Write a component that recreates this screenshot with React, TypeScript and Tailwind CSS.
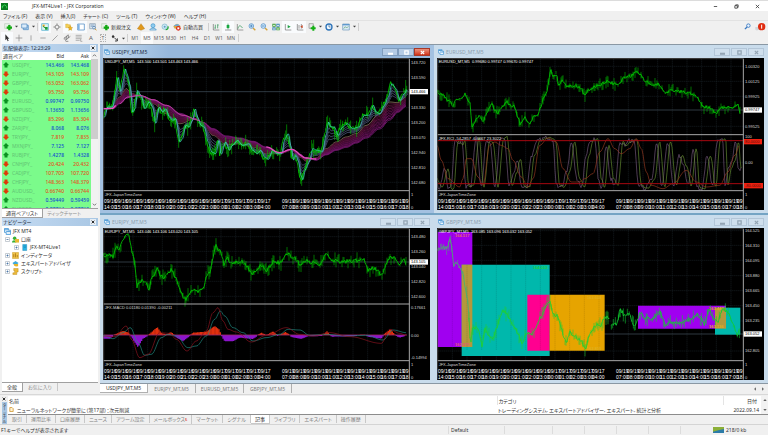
import React, { useState } from "react";
import clsx from "clsx";

type Pt = [number, number];

const quotes = [
  { name: "USDJPY_", bid: "143.466", ask: "143.468", up: true, blue: true },
  { name: "EURJPY_", bid: "143.105", ask: "143.109", up: false, blue: false },
  { name: "GBPJPY_", bid: "163.052", ask: "163.062", up: false, blue: false },
  { name: "AUDJPY_", bid: "95.750", ask: "95.756", up: false, blue: false },
  { name: "EURUSD_", bid: "0.99747", ask: "0.99750", up: true, blue: true },
  { name: "GBPUSD_", bid: "1.13650", ask: "1.13656", up: true, blue: true },
  { name: "NZDJPY_", bid: "85.296", ask: "85.304", up: false, blue: false },
  { name: "ZARJPY_", bid: "8.068", ask: "8.076", up: true, blue: true },
  { name: "TRYJPY_", bid: "7.819", ask: "7.835", up: false, blue: false },
  { name: "MXNJPY_", bid: "7.125", ask: "7.127", up: true, blue: true },
  { name: "RUBJPY_", bid: "1.4278", ask: "1.4328", up: true, blue: true },
  { name: "CNHJPY_", bid: "20.424", ask: "20.432", up: false, blue: false },
  { name: "CADJPY_", bid: "107.705", ask: "107.720", up: false, blue: false },
  { name: "CHFJPY_", bid: "148.363", ask: "148.379", up: false, blue: false },
  { name: "AUDUSD_", bid: "0.66740", ask: "0.66744", up: false, blue: false },
  { name: "NZDUSD_", bid: "0.59449", ask: "0.59459", up: true, blue: true },
  { name: "EURGBP_", bid: "0.87764", ask: "0.87769", up: true, blue: true },
];

const menus = [
  "ファイル (F)",
  "表示 (V)",
  "挿入(I)",
  "チャート (C)",
  "ツール (T)",
  "ウィンドウ (W)",
  "ヘルプ (H)",
];
const periods = ["M1", "M5", "M15", "M30", "H1", "H4", "D1", "W1", "MN"];
const chartTabs = ["USDJPY_MT,M5", "EURJPY_MT,M5", "EURUSD_MT,M5", "GBPJPY_MT,M5"];
const terminalTabs = [
  "取引",
  "運用比率",
  "口座履歴",
  "ニュース",
  "アラーム設定",
  "メールボックス",
  "マーケット",
  "シグナル",
  "記事",
  "ライブラリ",
  "エキスパート",
  "操作履歴",
];

// chart data, in thirds of a pixel
const usdjpy: Pt[] = [
  [2, 177], [10, 147], [25, 147], [35, 102], [42, 57], [50, 102], [58, 62], [63, 32], [70, 52], [78, 82],
  [85, 162], [93, 152], [100, 97], [110, 112], [122, 152], [135, 132], [145, 147], [155, 197], [165, 147],
  [175, 162], [185, 152], [195, 177], [205, 187], [215, 182], [227, 252], [235, 242], [245, 202], [255, 207],
  [265, 187], [273, 152], [280, 177], [290, 202], [300, 207], [312, 252], [322, 282], [335, 287], [345, 245],
  [350, 290], [365, 252], [375, 277], [385, 262], [400, 247], [415, 262], [435, 257], [445, 277], [460, 287],
  [470, 277], [480, 297], [493, 304], [505, 277], [520, 287], [533, 287], [540, 247], [552, 227], [562, 272],
  [567, 307], [575, 292], [583, 312], [590, 352], [595, 365], [605, 332], [615, 312], [625, 272], [640, 277],
  [655, 280], [665, 232], [673, 192], [680, 207], [690, 207], [702, 232], [715, 207], [730, 197], [745, 212],
  [765, 207], [780, 172], [795, 172], [808, 142], [815, 162], [828, 167], [840, 142], [852, 117], [863, 77],
  [875, 92], [888, 127], [900, 107], [911, 90],
];
const ribbonInner: Pt[] = [
  [2, 152], [30, 147], [50, 117], [70, 92], [85, 107], [120, 117], [150, 137], [190, 167], [230, 197],
  [275, 182], [300, 194], [330, 232], [370, 260], [410, 257], [450, 267], [490, 287], [530, 287], [565, 277],
  [590, 297], [610, 309], [640, 300], [670, 272], [700, 252], [730, 237], [760, 227], [790, 202], [830, 167],
  [860, 132], [885, 134], [910, 117],
];
const ribbonOuter: Pt[] = [
  [2, 152], [30, 152], [50, 137], [75, 117], [110, 112], [150, 125], [190, 142], [240, 172], [290, 187],
  [330, 212], [370, 234], [410, 240], [450, 250], [490, 267], [530, 284], [565, 274], [610, 300], [640, 303],
  [690, 277], [740, 262], [790, 237], [840, 203], [880, 163], [910, 142],
];
const eurusd: Pt[] = [
  [0, 98], [18, 112], [33, 127], [48, 142], [58, 127], [73, 127], [85, 107], [93, 132], [100, 137], [105, 212],
  [113, 192], [126, 177], [140, 190], [148, 167], [165, 132], [173, 157], [183, 167], [198, 142], [210, 132],
  [223, 147], [231, 140], [238, 162], [250, 200], [263, 177], [278, 200], [288, 177], [303, 172], [311, 147],
  [318, 122], [328, 107], [335, 67], [341, 30], [348, 57], [358, 47], [365, 82], [378, 67], [388, 87],
  [418, 84], [433, 92], [443, 112], [453, 97], [468, 87], [493, 77], [508, 70], [543, 80], [563, 57],
  [583, 52], [595, 42], [606, 47], [623, 67], [638, 80], [663, 77], [683, 104], [703, 97], [738, 102],
  [763, 107], [778, 117], [788, 127], [800, 147], [818, 147], [836, 167], [853, 147], [873, 147], [888, 152],
  [903, 140], [910, 167],
];
const rciSlow: Pt[] = [
  [0, 262], [13, 307], [33, 362], [68, 387], [78, 362], [88, 302], [103, 302], [123, 357], [138, 382],
  [158, 262], [173, 252], [193, 262], [213, 272], [228, 307], [253, 357], [273, 387], [288, 362], [308, 262],
  [333, 240], [358, 252], [378, 332], [403, 372], [428, 372], [443, 362], [468, 347], [488, 282], [513, 242],
  [533, 272], [553, 287], [578, 272], [598, 242], [613, 272], [628, 342], [643, 382], [678, 392], [708, 377],
  [748, 337], [778, 372], [808, 387], [848, 382], [873, 342], [893, 292], [908, 262],
];
const rciFast: Pt[] = [
  [0, 362], [16, 387], [33, 332], [43, 392], [50, 392], [63, 252], [78, 262], [83, 247], [96, 387], [110, 382],
  [126, 242], [141, 387], [158, 247], [168, 252], [183, 387], [200, 242], [210, 237], [226, 382], [240, 342],
  [250, 302], [263, 387], [278, 387], [293, 292], [310, 247], [338, 237], [356, 247], [368, 382], [383, 387],
  [398, 342], [413, 252], [428, 362], [443, 387], [456, 292], [468, 247], [483, 242], [493, 362], [503, 387],
  [516, 262], [530, 362], [543, 382], [558, 252], [568, 262], [586, 247], [600, 247], [613, 382], [633, 392],
  [653, 362], [668, 252], [683, 387], [701, 252], [718, 382], [736, 292], [748, 322], [763, 382], [778, 272],
  [788, 387], [803, 392], [820, 292], [836, 387], [850, 247], [866, 242], [873, 382], [883, 332], [893, 312],
  [905, 252], [912, 332],
];
const eurjpy: Pt[] = [
  [0, 79], [30, 84], [40, 59], [50, 62], [60, 39], [70, 24], [78, 24], [83, 54], [90, 84], [95, 109],
  [102, 174], [115, 159], [130, 169], [138, 184], [148, 144], [155, 139], [163, 114], [173, 144], [185, 152],
  [195, 134], [205, 124], [212, 139], [222, 159], [233, 189], [247, 216], [258, 199], [270, 184], [280, 189],
  [290, 189], [303, 179], [313, 134], [322, 134], [330, 84], [338, 46], [345, 64], [355, 72], [362, 109],
  [372, 89], [385, 109], [402, 104], [420, 102], [435, 119], [448, 139], [460, 124], [475, 109], [490, 126],
  [510, 102], [535, 104], [550, 74], [565, 86], [582, 94], [592, 114], [608, 99], [625, 104], [650, 109],
  [670, 76], [682, 94], [710, 102], [745, 99], [785, 96], [795, 124], [815, 119], [825, 129], [835, 144],
  [845, 119], [860, 84], [875, 89], [890, 116], [902, 92], [910, 109],
];
const macdBars: Pt[] = [
  [0, 8], [20, 8], [35, -2], [60, -12], [78, -7], [85, 3], [105, 34], [120, 8], [135, 0], [145, -8],
  [163, -24], [175, -6], [190, -2], [205, -9], [218, 3], [240, 16], [260, 1], [270, -7], [310, -10],
  [335, -27], [348, -17], [358, 5], [365, 16], [390, 16], [410, 5], [450, 9], [465, -1], [475, -7], [490, 0],
  [510, -11], [525, 1], [548, -9], [565, 3], [595, 9], [615, 1], [660, 0], [672, -11], [685, 2], [740, 1],
  [785, -1], [800, 3], [835, 8], [845, -5], [863, -17], [875, -2], [890, 5], [910, -1],
];
const macdSignal: Pt[] = [
  [0, 322], [30, 332], [60, 314], [82, 299], [105, 344], [125, 382], [145, 379], [175, 329], [195, 319],
  [220, 324], [255, 359], [280, 354], [310, 324], [335, 274], [352, 249], [365, 264], [390, 299], [420, 314],
  [450, 339], [490, 329], [530, 319], [555, 304], [590, 306], [620, 322], [670, 319], [730, 324], [790, 322],
  [840, 336], [870, 306], [910, 314],
];
const macdMain: Pt[] = [
  [0, 324], [35, 326], [70, 294], [85, 334], [110, 389], [135, 379], [170, 314], [200, 316], [220, 334],
  [252, 369], [280, 339], [310, 309], [330, 254], [345, 239], [360, 279], [375, 304], [400, 312], [445, 342],
  [490, 322], [550, 299], [590, 319], [630, 324], [680, 314], [740, 326], [835, 346], [860, 304], [890, 316],
  [910, 322],
];
const gbpjpy: Pt[] = [
  [2, 64], [23, 59], [33, 54], [38, 29], [45, 64], [50, 119], [58, 104], [68, 119], [78, 139], [85, 179],
  [91, 204], [96, 274], [100, 349], [108, 299], [123, 304], [135, 354], [143, 304], [158, 324], [168, 329],
  [178, 304], [188, 274], [198, 244], [213, 264], [223, 284], [238, 304], [256, 349], [268, 314], [283, 319],
  [293, 309], [308, 274], [323, 244], [333, 219], [340, 219], [348, 259], [363, 264], [373, 304], [388, 349],
  [398, 314], [418, 329], [433, 339], [446, 364], [458, 314], [478, 289], [493, 289], [503, 264], [518, 274],
  [523, 294], [538, 289], [550, 244], [563, 264], [578, 259], [593, 299], [608, 254], [623, 269], [643, 274],
  [656, 264], [671, 249], [685, 294], [698, 279], [718, 284], [748, 279], [768, 269], [783, 259], [803, 289],
  [815, 244], [828, 269], [843, 284], [856, 244], [873, 254], [888, 289], [900, 319], [909, 304],
];

const rand = (n: number) => {
  const v = Math.sin(n * 12.9898) * 43758.5453;
  return v - Math.floor(v);
};

const valueAt = (pts: Pt[], x: number, smooth = false) => {
  for (let i = 1; i < pts.length; i++) {
    if (x <= pts[i][0]) {
      const [x0, y0] = pts[i - 1];
      const [x1, y1] = pts[i];
      let t = Math.max(0, (x - x0) / (x1 - x0));
      if (smooth) t = (1 - Math.cos(Math.PI * t)) / 2;
      return y0 + (y1 - y0) * t;
    }
  }
  return pts[pts.length - 1][1];
};

const linePath = (pts: Pt[], smooth = false, noise = 0, shift = 0) => {
  const out: string[] = [];
  for (let x = pts[0][0]; x <= pts[pts.length - 1][0]; x += 3) {
    const y = valueAt(pts, x + shift, smooth) + (rand(x + 7) - 0.5) * noise;
    out.push(`${x} ${y.toFixed(1)}`);
  }
  return "M" + out.join("L");
};

const Candles = ({ pts, wick, color = "#00c800" }: { pts: Pt[]; wick: number; color?: string }) => {
  let wicks = "";
  for (let x = pts[0][0]; x <= pts[pts.length - 1][0]; x += 3) {
    const y = valueAt(pts, x);
    const up = rand(x) ** 3 * wick;
    const down = rand(x + 1) ** 3 * wick;
    wicks += `M${x} ${(y - up).toFixed(1)}V${(y + down).toFixed(1)}`;
  }
  return (
    <g stroke={color} fill="none">
      <path d={wicks} strokeWidth="2" opacity="0.85" />
      <path d={linePath(pts, false, wick / 2)} strokeWidth="2.5" />
    </g>
  );
};

const Ribbon = () => {
  const colors = [
    "#84705a", "#4c1030", "#641440", "#561038", "#701450", "#5a1044",
    "#701458", "#5c1050", "#7c1468", "#661058", "#8c1880", "#7c1c78",
  ];
  return (
    <g fill="none">
      {colors.map((c, i) => {
        const t = i / (colors.length - 1);
        const pts = ribbonInner.map(
          ([x, y]): Pt => [x, y * (1 - t) + valueAt(ribbonOuter, x) * t + (x > 620 ? t * 3 : 0)]
        );
        return <path key={c} d={linePath(pts, true)} stroke={c} strokeWidth="3" />;
      })}
      {[0.2, 0.35, 0.5, 0.65].map((t) => {
        const pts = usdjpy.map(([x, y]): Pt => [x + 4, y * (1 - t) + valueAt(ribbonInner, x) * t]);
        return <path key={t} d={linePath(pts)} stroke="#465272" strokeWidth="3" opacity="0.8" />;
      })}
    </g>
  );
};

const label = { fontFamily: '"Liberation Sans", sans-serif', fontSize: 12 };

type ChartProps = {
  info: string;
  scale: [number, string][];
  price: [number, string];
  split?: number;
  children: React.ReactNode;
};

const Chart = ({ info, scale, price, split, children }: ChartProps) => {
  const hours = [
    ...Array.from({ length: 15 }, (_, i) => ({
      x: 3 + i * 33,
      d: i > 9 ? "09/17" : "09/16",
      h: String((14 + i) % 24).padStart(2, "0") + ":00",
    })),
    ...Array.from({ length: 11 }, (_, i) => ({
      x: 537 + i * 33,
      d: "09/19",
      h: String(7 + i).padStart(2, "0") + ":00",
    })),
    { x: 900, d: "09", h: "18" },
  ];
  return (
    <svg viewBox="0 0 981 456" className="block w-full bg-black">
      <g stroke="#1f2a30" strokeWidth="2" strokeDasharray="3 3">
        {Array.from({ length: 20 }, (_, i) => (
          <path key={i} d={`M${46 + i * 44} 4V396`} />
        ))}
        {scale.map(([y]) => (
          <path key={y} d={`M2 ${y}H918`} />
        ))}
      </g>
      <path d={`M2 ${price[0]}H918`} stroke="#465460" strokeWidth="2" />
      {children}
      <g stroke="#a8a8a8" strokeWidth="3" fill="none">
        <path d="M919 2V455M2 398H919" />
        {split && <path d={`M2 ${split}H919`} />}
      </g>
      <path d="M2 455V2H919" stroke="#686868" strokeWidth="2" fill="none" />
      <g fill="#d8d8d8" style={label}>
        <text x="5" y="16" xmlSpace="preserve" fill="#fff">{info}</text>
        {scale.map(([y, t]) => (
          <text key={t} x="924" y={y + 4}>{t}</text>
        ))}
        <rect x="920" y={price[0] - 8} width="55" height="16" fill="#fff" />
        <text x="924" y={price[0] + 4} fill="#000">{price[1]}</text>
        <text x="5" y="414">JFX-JapanTimeZone</text>
        <text x="924" y="414">1</text>
        <text x="924" y="453">0</text>
      </g>
      <g fill="#fff" fontSize="15" fontFamily='"Liberation Sans", sans-serif'>
        {hours.map(({ x, h, d }) => (
          <g key={x}>
            <text x={x} y="435">{d}</text>
            <text x={x} y="452">{h}</text>
          </g>
        ))}
      </g>
    </svg>
  );
};

const ChartWindow = ({ title, active, children }: { title: string; active?: boolean; children: React.ReactNode }) => (
  <section
    className={clsx(
      "min-w-0 pr-1 pb-[3px] pl-[3px]",
      active ? "bg-[#a3c1e1]" : "bg-[#c9dcec]"
    )}
  >
    <header
      className={clsx(
        "flex h-[13px] items-center gap-[2px] pl-px",
        active
          ? "bg-linear-to-r from-[#c3d9ee] to-[#97b8dc] to-20% text-[#16283c]"
          : "text-[#8c9eae]"
      )}
    >
      <svg viewBox="0 0 12 12" className="size-[6px]">
        <path d="M1 1H8V4H11V11H4V8H1Z" fill="#eaf5ff" stroke="#58a0d8" strokeWidth="1.5" />
        <path d="M1 3H8M4 6H11" stroke="#58a0d8" strokeWidth="2" />
      </svg>
      <h2 className="grow">{title}</h2>
      <div className={clsx("mt-[3px] flex h-2 self-start", !active && "gap-px")}>
        {["最小化", "最大化", "閉じる"].map((name, i) => (
          <button
            key={name}
            type="button"
            aria-label={name}
            className={clsx(
              "flex h-2 w-4 items-center justify-center border",
              active && i === 2 && "border-[#a83828] bg-linear-to-b from-[#e8907c] to-[#d02c10]",
              active && i !== 2 && "border-[#7f9cbd] bg-[#b4cbe5]",
              !active && "border-[#b3c6d8] bg-[#cfdfed]"
            )}
          >
            <svg viewBox="0 0 12 12" className="size-[5px]" fill="none" strokeWidth="3">
              <path
                d={["M1 8H11V10H1Z", "M2 2H10V10H2Z", "M2 2L10 10M10 2L2 10"][i]}
                stroke={active ? "#fff" : "#93a4b4"}
              />
            </svg>
          </button>
        ))}
      </div>
    </header>
    {children}
  </section>
);

const icons: Record<string, React.ReactNode> = {
  newChart: (
    <>
      <path d="M2 2H16V16H2Z" fill="#e8f3e8" stroke="#8aa08a" />
      <path d="M8 14H24M16 6V22" stroke="#12a812" strokeWidth="7" />
    </>
  ),
  profiles: (
    <>
      <path d="M7 7H22V20H7Z" fill="#a9cdec" stroke="#4a86c0" strokeWidth="2" />
      <path d="M2 3H18V15H2Z" fill="#dcecfa" stroke="#4a86c0" strokeWidth="2" />
    </>
  ),
  market: (
    <>
      <path d="M2 2H22V22H2Z" fill="#dff5f0" stroke="#3fa7c8" strokeWidth="2" />
      <path d="M5 5H11V11H5Z" fill="#e8a020" />
      <path d="M12 12H20V20H12Z" fill="#1a9a38" />
      <path d="M6 10L17 18" stroke="#20a040" strokeWidth="3" />
    </>
  ),
  crosshair: (
    <g fill="none" stroke="#707070" strokeWidth="2">
      <circle cx="12" cy="12" r="6" />
      <path d="M12 1V8M12 16V23M1 12H8M16 12H23" />
    </g>
  ),
  folder: (
    <>
      <path d="M2 3H9L11 5H16V14H2Z" fill="#f3cf58" stroke="#c99a20" />
      <path d="M16 8L18 13L23 14L19 17L20 22L16 20L11 22L13 17L9 14L14 13Z" fill="#f0b420" stroke="#b98510" />
    </>
  ),
  panel: (
    <>
      <path d="M2 3H22V21H2Z" fill="#fff" stroke="#3d7fc0" strokeWidth="2" />
      <path d="M3 4H8V20H3Z" fill="#7cb2e6" />
    </>
  ),
  tester: (
    <>
      <path d="M2 2H19V17H2Z" fill="#dde8f2" stroke="#8499ac" strokeWidth="2" />
      <path d="M5 6H16M5 10H12" stroke="#6b90b4" strokeWidth="2" />
      <circle cx="15" cy="14" r="4" fill="#e8f4ff" stroke="#3b6fa8" strokeWidth="2" />
      <path d="M18 17L22 22" stroke="#d09a30" strokeWidth="3" />
    </>
  ),
  gold: <path d="M12 2L20 13L23 17L12 22L1 17L5 12Z" fill="#e0981c" stroke="#a36c10" />,
  person: (
    <>
      <circle cx="12" cy="8" r="6" fill="#8fcdf0" stroke="#3f92c8" strokeWidth="2" />
      <path d="M2 21C4 14 20 14 22 21Z" fill="#c8e2f4" stroke="#3f92c8" strokeWidth="2" />
    </>
  ),
  signal: (
    <>
      <circle cx="11" cy="11" r="8" fill="#d0e8f2" stroke="#7ab2cc" strokeWidth="2" />
      <circle cx="11" cy="11" r="3" fill="#5aa0c8" />
      <path d="M14 20C20 20 22 16 21 10" fill="none" stroke="#20a838" strokeWidth="4" />
    </>
  ),
  auto: (
    <>
      <path d="M2 9L12 3L22 9L18 16H5Z" fill="#e9ae30" stroke="#b07c18" />
      <path d="M3 10C4 2 18 2 20 8Z" fill="#68a8dc" />
      <circle cx="16" cy="16" r="7" fill="#d82818" />
      <path d="M13 13H19V19H13Z" fill="#fff" />
    </>
  ),
  bars: (
    <g fill="none" strokeWidth="2">
      <path d="M4 3V21H22" stroke="#707070" />
      <path d="M10 5V17M10 15H7M17 4V16M17 6H20" stroke="#23904a" />
    </g>
  ),
  candle: (
    <g strokeWidth="2">
      <path d="M3 21H22" stroke="#707070" />
      <path d="M12 2V19" stroke="#118a30" />
      <path d="M8 6H16V15H8Z" fill="#18a840" />
    </g>
  ),
  line: (
    <g fill="none" strokeWidth="2">
      <path d="M4 3V21H22" stroke="#707070" />
      <path d="M6 17C9 4 14 8 20 15" stroke="#23904a" />
    </g>
  ),
  zoomIn: (
    <>
      <path d="M15 15L22 22" stroke="#d3a238" strokeWidth="4" />
      <circle cx="10" cy="9" r="7" fill="#cfe7fa" stroke="#4488c4" strokeWidth="2" />
      <path d="M6 9H14M10 5V13" stroke="#2d6fb0" strokeWidth="2" />
    </>
  ),
  zoomOut: (
    <>
      <path d="M15 15L22 22" stroke="#d3a238" strokeWidth="4" />
      <circle cx="10" cy="9" r="7" fill="#cfe7fa" stroke="#4488c4" strokeWidth="2" />
      <path d="M6 9H14" stroke="#2d6fb0" strokeWidth="2" />
    </>
  ),
  tile: (
    <>
      <path d="M1 2H11V11H1ZM13 13H23V22H13Z" fill="#3f9e38" />
      <path d="M13 2H23V11H13ZM1 13H11V22H1Z" fill="#3f86b8" />
      <path d="M3 7H9M15 7H21M3 18H9M15 18H21" stroke="#e8f8e8" strokeWidth="3" />
    </>
  ),
  scroll: (
    <>
      <path d="M4 3V21H22" fill="none" stroke="#707070" strokeWidth="2" />
      <path d="M11 6L20 11L11 16Z" fill="#1ea042" />
    </>
  ),
  shift: (
    <>
      <path d="M4 3V21H22M16 3V17" fill="none" stroke="#707070" strokeWidth="2" />
      <path d="M20 6L13 11L20 16Z" fill="#c84828" />
      <path d="M9 6V17" stroke="#707070" strokeWidth="2" />
    </>
  ),
  indicator: (
    <>
      <path d="M3 2H16V16H3Z" fill="#e8e8e8" stroke="#8c8c8c" strokeWidth="2" />
      <path d="M8 16H23M16 8V23" stroke="#12b012" strokeWidth="6" />
    </>
  ),
  clock: (
    <>
      <circle cx="12" cy="12" r="9" fill="#f2f9ff" stroke="#2f74b8" strokeWidth="4" />
      <path d="M12 6V12H17" fill="none" stroke="#2f5f90" strokeWidth="2" />
    </>
  ),
  template: (
    <>
      <path d="M2 3H22V21H2Z" fill="#dbeaf6" stroke="#6d98bc" strokeWidth="2" />
      <path d="M2 5H22" stroke="#5f98cc" strokeWidth="4" />
      <path d="M5 17L10 11L14 15L19 10" fill="none" stroke="#58a068" strokeWidth="2" />
    </>
  ),
  pointer: <path d="M7 1V19L11 15L14 22L17 20L14 14H19Z" fill="#303030" />,
  cross: <path d="M12 2V22M2 12H22" stroke="#808080" strokeWidth="2" />,
  vline: <path d="M12 4V20" stroke="#808080" strokeWidth="2" />,
  hline: <path d="M4 12H20" stroke="#808080" strokeWidth="2" />,
  trend: <path d="M4 20L20 4" stroke="#808080" strokeWidth="2" />,
  channel: <path d="M2 14L16 2M6 20L22 7M6 10V18M11 6V16M16 3V12M8 22H16" stroke="#606060" strokeWidth="2" />,
  fib: <path d="M2 4H20M2 9H20M2 14H20M2 19H14M17 15V22H22" stroke="#909090" strokeWidth="2" fill="none" />,
  arrows: (
    <>
      <path d="M6 2L11 8L6 13L2 8Z" fill="#303030" />
      <path d="M10 11L19 20M19 13V21H12" fill="none" stroke="#404040" strokeWidth="3" />
    </>
  ),
};

const ToolButton = ({ icon, name, on }: { icon: string; name: string; on?: boolean }) => (
  <button
    type="button"
    aria-label={name}
    aria-pressed={on}
    className={clsx("flex size-3 shrink-0 items-center justify-center", on && "bg-[#f9fbfd]")}
  >
    <svg viewBox="0 0 24 24" className="size-2">{icons[icon]}</svg>
  </button>
);

const Caret = () => (
  <svg viewBox="0 0 12 12" className="w-[5px] shrink-0 p-px">
    <path d="M0 3H12L6 10Z" fill="#404040" />
  </svg>
);

const Sep = () => <span className="mx-px h-2 w-px shrink-0 bg-[#cfcfcf]" />;

const PanelTitle = ({ children }: { children: React.ReactNode }) => (
  <div className="flex h-2 items-center justify-between bg-linear-to-r from-[#c6dcf3] to-[#a9c7e4] px-px text-[#1c2c40]">
    <h2>{children}</h2>
    <button type="button" aria-label="閉じる" className="mr-px flex size-[6px] items-center justify-center bg-[#e6eef6]">
      <svg viewBox="0 0 12 12" className="size-1">
        <path d="M2 2L10 10M10 2L2 10" stroke="#303030" strokeWidth="3" />
      </svg>
    </button>
  </div>
);

const TreeIcon = ({ kind }: { kind: string }) => (
  <svg viewBox="0 0 16 16" className="size-[7px] shrink-0">
    {kind === "root" && (
      <path d="M1 1H10V5H15V15H5V10H1ZM1 4H10M5 8H15" fill="#dff0fc" stroke="#4b9ad8" strokeWidth="2" />
    )}
    {kind === "accounts" && (
      <>
        <circle cx="6" cy="5" r="4" fill="#35b035" />
        <path d="M0 15C0 8 9 8 10 15Z" fill="#35b035" />
        <path d="M7 7H16V15H7Z" fill="#e8b830" />
      </>
    )}
    {kind === "server" && <path d="M4 1H13V15H4ZM7 4H11V8H7Z" fill="#28b4e4" stroke="#1684b4" />}
    {kind === "indicator" && (
      <>
        <path d="M1 1H15V15H1Z" fill="#f0c448" stroke="#c49420" />
        <path d="M4 12V5M8 12V3M12 12V7" stroke="#b07c18" strokeWidth="2" />
      </>
    )}
    {kind === "expert" && (
      <>
        <path d="M1 7L8 2L15 7L11 10H4Z" fill="#3fa8d8" />
        <path d="M4 9H14V14L9 15L5 13Z" fill="#e8b428" />
      </>
    )}
    {kind === "script" && <path d="M4 1H14V9H11V15H2V11H6V6H4Z" fill="#edbb38" stroke="#b98618" />}
  </svg>
);

const tree = [
  { name: "JFX MT4", kind: "root", pad: "pl-[2px]", box: "" },
  { name: "口座", kind: "accounts", pad: "pl-[3px]", box: "−" },
  { name: "JFX-MT4Live1", kind: "server", pad: "pl-3", box: "+" },
  { name: "インディケータ", kind: "indicator", pad: "pl-[3px]", box: "+" },
  { name: "エキスパートアドバイザ", kind: "expert", pad: "pl-[3px]", box: "+" },
  { name: "スクリプト", kind: "script", pad: "pl-[3px]", box: "+" },
];

const App = () => {
  const [period, setPeriod] = useState("M5");
  const [chartTab, setChartTab] = useState(chartTabs[0]);
  const [terminalTab, setTerminalTab] = useState("記事");

  return (
    <div className="flex min-h-screen w-full flex-col overflow-hidden border-t border-[#dcdcdc] bg-[#f0f0f0] font-['Noto_Sans','Noto_Sans_CJK_JP',sans-serif] text-[5px] leading-[8px] text-[#303030] [font-feature-settings:'palt']">
      <header className="flex h-[10px] items-center bg-white pr-2 pl-px">
        <svg viewBox="0 0 16 16" className="size-[7px]">
          <path d="M0 0H16V16H0Z" fill="#0a7a20" />
          <path d="M3 12V6M3 9L8 4L13 8V12" stroke="#3ce05c" strokeWidth="2" fill="none" />
        </svg>
        <h1 className="ml-6 grow">JFX-MT4Live1 - JFX Corporation</h1>
        <div className="flex gap-4">
          {["M2 6H10", "M2 4H8V10H2ZM4 4V2H10V8H8", "M2 2L10 10M10 2L2 10"].map((d, i) => (
            <button key={d} type="button" aria-label={["最小化", "元に戻す", "閉じる"][i]}>
              <svg viewBox="0 0 12 12" className="size-[5px]">
                <path d={d} fill="none" stroke="#404040" strokeWidth="2" />
              </svg>
            </button>
          ))}
        </div>
      </header>

      <nav className="flex h-[9px] items-center gap-2 pl-[3px]">
        {menus.map((m) => (
          <button key={m} type="button">{m}</button>
        ))}
      </nav>

      <div className="flex h-3 items-center border-t border-[#e2e2e2] pl-[2px]">
        <ToolButton icon="newChart" name="新規チャート" />
        <Caret />
        <ToolButton icon="profiles" name="チャートの組表示" />
        <Caret />
        <Sep />
        <ToolButton icon="market" name="気配値表示" on />
        <ToolButton icon="crosshair" name="データウィンドウ" />
        <ToolButton icon="folder" name="ナビゲーター" on />
        <ToolButton icon="panel" name="ターミナル" on />
        <ToolButton icon="tester" name="ストラテジーテスター" />
        <button type="button" className="flex w-9 items-center whitespace-nowrap">
          <svg viewBox="0 0 24 24" className="mx-[2px] size-2 shrink-0">{icons.newChart}</svg>
          新規注文
        </button>
        <ToolButton icon="gold" name="メタエディター" />
        <ToolButton icon="person" name="コミュニティ" />
        <ToolButton icon="signal" name="シグナル" />
        <button type="button" className="flex w-9 items-center whitespace-nowrap">
          <svg viewBox="0 0 24 24" className="mx-[2px] size-2 shrink-0">{icons.auto}</svg>
          自動売買
        </button>
        <Sep />
        <ToolButton icon="bars" name="バーチャート" />
        <ToolButton icon="candle" name="ローソク足" on />
        <ToolButton icon="line" name="ラインチャート" />
        <ToolButton icon="zoomIn" name="ズームイン" />
        <ToolButton icon="zoomOut" name="ズームアウト" />
        <ToolButton icon="tile" name="整列" />
        <ToolButton icon="scroll" name="自動スクロール" on />
        <ToolButton icon="shift" name="チャートシフト" on />
        <ToolButton icon="indicator" name="インディケータ" />
        <Caret />
        <ToolButton icon="clock" name="時間足設定" />
        <Caret />
        <ToolButton icon="template" name="定型チャート" />
        <Caret />
        <Sep />
        <div className="ml-auto flex items-center gap-1 pr-[2px]">
          <button type="button" aria-label="検索">
            <svg viewBox="0 0 16 16" className="size-[7px]">
              <path d="M7 9L2 14" stroke="#3a78c0" strokeWidth="3" />
              <circle cx="10" cy="6" r="4" fill="#eaf4ff" stroke="#3a78c0" strokeWidth="2" />
            </svg>
          </button>
          <button type="button" className="flex items-end" aria-label="通知 1">
            <svg viewBox="0 0 32 24" className="h-2">
              <path d="M1 12H16V20H9L5 24V20H1Z" fill="#d0d4d8" />
              <circle cx="20" cy="11" r="11" fill="#e02c10" />
              <path d="M20 5V17" stroke="#fff" strokeWidth="3" />
            </svg>
          </button>
        </div>
      </div>

      <div className="flex h-3 items-center pl-px text-[#606060]">
        <ToolButton icon="pointer" name="カーソル" on />
        <ToolButton icon="cross" name="十字カーソル" />
        <ToolButton icon="vline" name="垂直線" />
        <ToolButton icon="hline" name="水平線" />
        <ToolButton icon="trend" name="トレンドライン" />
        <ToolButton icon="channel" name="平行チャネル" />
        <ToolButton icon="fib" name="フィボナッチ" />
        <button type="button" className="size-3 text-[6px]">A</button>
        <button type="button" className="flex size-3 items-center justify-center">
          <span className="border border-dotted border-[#b0b0b0] px-px leading-[6px]">T</span>
        </button>
        <ToolButton icon="arrows" name="矢印" />
        <Caret />
        <Sep />
        {periods.map((p) => (
          <button
            key={p}
            type="button"
            aria-pressed={p === period}
            onClick={() => setPeriod(p)}
            className={clsx("size-3 shrink-0 text-center", p === period && "bg-[#fafafa]")}
          >
            {p}
          </button>
        ))}
        <Sep />
      </div>

      <main className="flex grow items-stretch">
        <aside className="flex w-25 shrink-0 flex-col px-[2px]">
          <PanelTitle>気配値表示: 12:23:29</PanelTitle>
          <div className="flex h-[156px] bg-white">
            <div className="grow overflow-hidden">
              <table className="w-full table-fixed border-collapse">
                <thead>
                  <tr className="h-2">
                    <th className="w-9 p-0 pl-px text-left font-normal">通貨ペア</th>
                    <th className="w-[26px] p-0 text-right font-normal">Bid</th>
                    <th className="p-0 pr-[2px] text-right font-normal">Ask</th>
                  </tr>
                </thead>
                <tbody className="bg-[#7bfb8b]">
                  {quotes.map((q) => (
                    <tr key={q.name} className="h-[9px]">
                      <td className="p-0 text-[#62c474]">
                        <span className="flex items-center gap-[3px] pl-px">
                          <svg viewBox="0 0 12 12" className="size-[6px]">
                            <path
                              d={q.up ? "M6 0L12 6L9 7V11H3V7L0 6Z" : "M6 12L12 6L9 5V1H3V5L0 6Z"}
                              fill={q.up ? "#0a9020" : "#e03808"}
                            />
                          </svg>
                          {q.name}
                        </span>
                      </td>
                      <td className={clsx("p-0 text-right font-medium", q.blue ? "text-[#1450d0]" : "text-[#e0541c]")}>
                        {q.bid}
                      </td>
                      <td className={clsx("p-0 pr-[2px] text-right font-medium", q.blue ? "text-[#1450d0]" : "text-[#e0541c]")}>
                        {q.ask}
                      </td>
                    </tr>
                  ))}
                </tbody>
              </table>
            </div>
            <div className="flex w-[7px] shrink-0 flex-col items-center bg-[#f2f2f2]">
              <svg viewBox="0 0 12 12" className="my-px size-[5px]">
                <path d="M2 8L6 4L10 8" fill="none" stroke="#606060" strokeWidth="2" />
              </svg>
              <div className="h-20 w-full bg-[#cdcdcd]" />
              <svg viewBox="0 0 12 12" className="mt-auto mb-px size-[5px]">
                <path d="M2 4L6 8L10 4" fill="none" stroke="#606060" strokeWidth="2" />
              </svg>
            </div>
          </div>
          <div className="flex h-[10px] items-start border-t border-[#a0a0a0]">
            <button type="button" className="h-[9px] border-r border-b border-[#a0a0a0] bg-white px-1">通貨ペアリスト</button>
            <button type="button" className="px-1 text-[#909090]">ティックチャート</button>
          </div>

          <PanelTitle>ナビゲーター</PanelTitle>
          <ul className="grow bg-white pt-px">
            {tree.map((t) => (
              <li key={t.name} className={clsx("flex h-2 items-center gap-[2px] whitespace-nowrap", t.pad)}>
                {t.box && (
                  <svg viewBox="0 0 10 10" className="size-[5px] shrink-0">
                    <path d="M1 1H9V9H1Z" fill="#fff" stroke="#b4bcc4" strokeWidth="1.5" />
                    <path d={t.box === "+" ? "M3 5H7M5 3V7" : "M3 5H7"} stroke="#3c6ca0" strokeWidth="1.5" />
                  </svg>
                )}
                <TreeIcon kind={t.kind} />
                {t.name}
              </li>
            ))}
          </ul>
          <div className="flex h-3 items-start border-t border-[#a0a0a0]">
            <button type="button" className="h-[9px] border-r border-b border-[#a0a0a0] bg-white px-[5px]">全般</button>
            <button type="button" className="border-r border-[#c8c8c8] px-[5px] text-[#909090]">お気に入り</button>
          </div>
        </aside>

        <div className="min-w-0 grow">
          <div className="grid grid-cols-2 gap-y-[2px] border-t border-b border-[#8a98a4] bg-[#74a4c4]">
            <ChartWindow title="USDJPY_MT,M5" active>
              <Chart
                info="USDJPY_MT,M5  143.500 143.501 143.463 143.466"
                scale={[
                  [14, "143.720"], [58, "143.590"], [149, "143.330"], [193, "143.200"],
                  [238, "143.070"], [283, "142.940"], [328, "142.810"], [373, "142.680"],
                ]}
                price={[101, "143.466"]}
              >
                <Ribbon />
                <Candles pts={usdjpy} wick={30} />
                <path d={linePath(usdjpy, true, 0, -4)} fill="none" stroke="#48d8d0" strokeWidth="2" />
                <path d={linePath(ribbonOuter.slice(2, 9), true)} fill="none" stroke="#d048b0" strokeWidth="3" />
                <path d={linePath([[2, 152], [30, 151], [40, 140]])} fill="none" stroke="#f050c8" strokeWidth="4" />
                <path d={linePath(ribbonOuter.slice(13, 18), true)} fill="none" stroke="#e04cbc" strokeWidth="4" />
              </Chart>
            </ChartWindow>
            <ChartWindow title="EURUSD_MT,M5">
              <Chart
                info="EURUSD_MT,M5  0.99680 0.99747 0.99670 0.99747"
                scale={[[25, "1.00320"], [70, "1.00125"], [115, "0.99925"], [205, "0.99525"], [313, "0.00"]]}
                price={[156, "0.99747"]}
                split={230}
              >
                <Candles pts={eurusd} wick={22} />
                <path d={linePath(rciFast, true, 14, 9)} fill="none" stroke="#74587c" strokeWidth="2" />
                <path d={linePath(rciFast, true, 6)} fill="none" stroke="#648c30" strokeWidth="2" />
                <path d={linePath(rciSlow, true)} fill="none" stroke="#94381f" strokeWidth="2" />
                <path d="M2 248H918M2 377H918" stroke="#a80810" strokeWidth="3" />
                <g style={label}>
                  <text x="5" y="245" fill="#e8e8e8">JFX-RCI -54.2857 -6.6667 23.3022</text>
                  <text x="924" y="241" fill="#d8d8d8">100</text>
                  <rect x="920" y="243" width="55" height="16" fill="#f02010" />
                  <rect x="920" y="375" width="58" height="16" fill="#f02010" />
                  <text x="924" y="255" fill="#501008">80.0000</text>
                  <text x="924" y="387" fill="#501008">-80.0000</text>
                </g>
              </Chart>
            </ChartWindow>
            <ChartWindow title="EURJPY_MT,M5">
              <Chart
                info="EURJPY_MT,M5  143.046 143.106 143.020 143.105"
                scale={[[26, "143.480"], [70, "143.260"], [116, "143.040"], [160, "142.820"], [205, "142.600"]]}
                price={[102, "143.105"]}
                split={228}
              >
                <Candles pts={eurjpy} wick={26} />
                <path
                  d={Array.from({ length: 228 }, (_, i) => {
                    const v = valueAt(macdBars, i * 4);
                    return v < 0 ? `M${i * 4} 321v${v.toFixed(1)}` : "";
                  }).join("")}
                  stroke="#f83410"
                  strokeWidth="3.5"
                />
                <path
                  d={Array.from({ length: 228 }, (_, i) => {
                    const v = valueAt(macdBars, i * 4);
                    return v > 0 ? `M${i * 4} 321v${(v + 3).toFixed(1)}` : "";
                  }).join("")}
                  stroke="#8c14cc"
                  strokeWidth="4"
                />
                <path d="M2 321H912" stroke="#9a2a6a" strokeWidth="2.5" />
                <path d={linePath(macdSignal, true)} fill="none" stroke="#1f8a80" strokeWidth="2" />
                <path d={linePath(macdMain, true)} fill="none" stroke="#8c1420" strokeWidth="2" />
                <g fill="#d8d8d8" style={label}>
                  <text x="5" y="244">JFX-MACD 0.01180 0.01390 -0.00211</text>
                  <text x="924" y="244">0.17661</text>
                  <text x="924" y="326">0.00</text>
                  <text x="924" y="393">-0.14994</text>
                </g>
              </Chart>
            </ChartWindow>
            <ChartWindow title="GBPJPY_MT,M5">
              <Chart
                info="GBPJPY_MT,M5  163.085 163.096 163.032 163.052"
                scale={[
                  [8, "164.525"], [52, "164.310"], [97, "164.095"], [143, "163.880"], [188, "163.665"],
                  [233, "163.450"], [279, "163.235"], [369, "162.805"],
                ]}
                price={[318, "163.052"]}
              >
                <path d="M2 12H106V357H2Z" fill="#a000f0" />
                <path d="M74 110H338V384H74Z" fill="#00b8ac" />
                <path d="M74 110H106V357H74Z" fill="#b4983c" />
                <path d="M271 200H338V368H271Z" fill="#ff0090" />
                <path d="M338 200H503V368H338Z" fill="#e6a400" />
                <path d="M603 233H867V302H603Z" fill="#a000f0" />
                <path d="M834 239H910V320H834Z" fill="#00b8ac" />
                <path d="M834 239H867V302H834Z" fill="#b4983c" />
                <g stroke="#000" strokeOpacity="0.22" strokeWidth="2" strokeDasharray="3 3">
                  {[46, 90, 134, 178, 222, 266, 310, 354, 398, 442, 486].map((x) => (
                    <path key={x} d={`M${x} ${x < 70 ? 14 : x > 338 ? 200 : 112}V366`} />
                  ))}
                </g>
                <g style={label} fill="#e0b020" fontWeight="bold">
                  <text x="54" y="28" fill="#e06070">164.517</text>
                  <text x="54" y="354" fill="#e06070">162.875</text>
                  <text x="288" y="122" fill="#20d040">164.033</text>
                  <text x="450" y="212">163.608</text>
                  <text x="450" y="365">162.815</text>
                  <text x="816" y="245">163.448</text>
                  <text x="816" y="299">163.136</text>
                </g>
                <Candles pts={gbpjpy.slice(0, 12)} wick={26} color="#48b070" />
                <Candles pts={gbpjpy.slice(11, 46)} wick={26} color="#20d030" />
                <Candles pts={gbpjpy.slice(46)} wick={24} color="#10cc30" />
              </Chart>
            </ChartWindow>
          </div>
          <div className="flex h-[10px] items-start">
            {chartTabs.map((t) => (
              <button
                key={t}
                type="button"
                onClick={() => setChartTab(t)}
                className={clsx(
                  "h-[9px] w-12 border-r border-[#b0b0b0]",
                  t === chartTab ? "border-b bg-white" : "text-[#808080]"
                )}
              >
                {t}
              </button>
            ))}
            <div className="mt-[3px] ml-auto flex gap-1 pr-[3px]">
              <svg viewBox="0 0 12 12" className="size-1"><path d="M9 1V11L3 6Z" fill="#707070" /></svg>
              <svg viewBox="0 0 12 12" className="size-1"><path d="M3 1V11L9 6Z" fill="#707070" /></svg>
            </div>
          </div>
        </div>
      </main>

      <section className="flex border-t border-[#d8d8d8] pt-px">
        <div className="flex w-2 shrink-0 flex-col items-center">
          <button type="button" aria-label="閉じる" className="mt-px">
            <svg viewBox="0 0 12 12" className="size-1">
              <path d="M2 2L10 10M10 2L2 10" stroke="#303030" strokeWidth="3" />
            </svg>
          </button>
          <div className="mt-px flex grow items-center justify-center bg-[#a9c7e4] text-[4px] leading-[5px] [writing-mode:vertical-rl]">
            ターミナル
          </div>
        </div>
        <div className="min-w-0 grow">
          <div className="flex border-b border-[#8c8c8c] bg-white">
            <table className="w-full table-fixed border-collapse">
              <thead>
                <tr className="h-[9px]">
                  <th className="p-0 pl-px text-left font-normal">名前</th>
                  <th className="w-[226px] border-l border-[#e4e4e4] p-0 pl-px text-left font-normal">カテゴリ</th>
                  <th className="w-[38px] border-l border-[#e4e4e4] p-0 pr-1 text-right font-normal">日付</th>
                </tr>
              </thead>
              <tbody>
                <tr className="h-[9px]">
                  <td className="p-0 pl-px">
                    <span className="flex items-center gap-[3px]">
                      <svg viewBox="0 0 12 12" className="size-[5px]">
                        <path d="M2 1H7L10 4V11H2Z" fill="#fff4d8" stroke="#d09830" strokeWidth="2" />
                      </svg>
                      ニューラルネットワークが簡単に（第17部）：次元削減
                    </span>
                  </td>
                  <td className="p-0 pl-px">トレーディングシステム, エキスパートアドバイザー, エキスパート, 統計と分析</td>
                  <td className="p-0 pr-[2px] text-right">2022.09.14</td>
                </tr>
              </tbody>
            </table>
            <div className="flex w-[7px] shrink-0 flex-col items-center justify-between bg-[#f2f2f2] py-[2px]">
              <svg viewBox="0 0 12 12" className="size-1"><path d="M1 9L6 3L11 9" fill="#606060" /></svg>
              <svg viewBox="0 0 12 12" className="size-1"><path d="M1 3L6 9L11 3" fill="#606060" /></svg>
            </div>
          </div>
          <div className="flex h-[9px] items-start text-[#808080]">
            {terminalTabs.map((t) => (
              <button
                key={t}
                type="button"
                onClick={() => setTerminalTab(t)}
                className={clsx(
                  "border-r border-[#c8c8c8] px-1 whitespace-nowrap",
                  t === terminalTab && "border-b bg-white text-[#202020]"
                )}
              >
                {t}
                {t === "メールボックス" && <span className="text-[4px] text-[#d82010]">6</span>}
              </button>
            ))}
          </div>
        </div>
      </section>

      <footer className="flex h-[11px] items-center border-t border-[#d4d4d4]">
        <p className="grow pl-px">F1キーでヘルプが表示されます</p>
        <p className="w-14 border-l border-[#dcdcdc] pl-[2px]">Default</p>
        <span className="h-2 w-12 border-l border-[#dcdcdc]" />
        <span className="h-2 w-8 border-l border-[#dcdcdc]" />
        <span className="h-2 w-8 border-l border-[#dcdcdc]" />
        <span className="h-2 w-8 border-l border-[#dcdcdc]" />
        <span className="h-2 w-8 border-l border-[#dcdcdc]" />
        <p className="flex w-22 items-center gap-[2px] border-l border-[#dcdcdc] pl-8">
          <svg viewBox="0 0 33 18" className="h-[6px] w-[11px]">
            <path d="M0 0H33V18H0Z" fill="#2c7ca8" />
            <path d="M0 0H33V6L16 10L0 14Z" fill="#8cb038" />
          </svg>
          218/0 kb
        </p>
      </footer>
    </div>
  );
};

export default App;
